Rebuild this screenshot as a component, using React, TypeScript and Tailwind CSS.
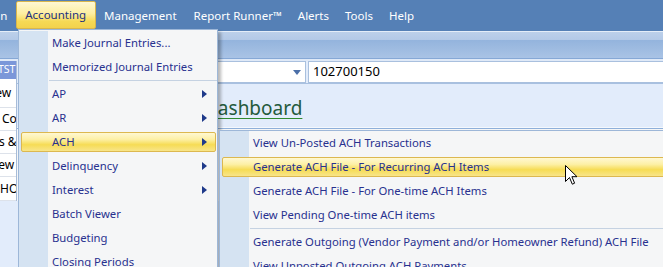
import React from "react";

const Arrow = () => (
  <svg width="5" height="8" viewBox="0 0 5 8" className="shrink-0">
    <path d="M0 0 L5 4 L0 8 Z" fill="#1e3a8a" />
  </svg>
);

type Item = { label: string; sub?: boolean; hi?: boolean } | "sep";

const mainItems: Item[] = [
  { label: "Make Journal Entries..." },
  { label: "Memorized Journal Entries" },
  "sep",
  { label: "AP", sub: true },
  { label: "AR", sub: true },
  { label: "ACH", sub: true, hi: true },
  { label: "Delinquency", sub: true },
  { label: "Interest", sub: true },
  { label: "Batch Viewer" },
  { label: "Budgeting" },
  { label: "Closing Periods" },
];

const subItems: Item[] = [
  { label: "View Un-Posted ACH Transactions" },
  { label: "Generate ACH File - For Recurring ACH Items", hi: true },
  { label: "Generate ACH File - For One-time ACH Items" },
  { label: "View Pending One-time ACH items" },
  "sep",
  { label: "Generate Outgoing (Vendor Payment and/or Homeowner Refund) ACH File" },
  { label: "View Unposted Outgoing ACH Payments" },
];

function MenuList({ items, arrowPad }: { items: Item[]; arrowPad: boolean }) {
  return (
    <div className="flex flex-col">
      {items.map((it, i) =>
        it === "sep" ? (
          <div key={i} className="h-[3px] flex">
            <div className="w-[29px] shrink-0 bg-[#d5e3f2]" />
            <div className="flex-1 flex flex-col justify-start pl-[1px]">
              <div className="h-px mt-[1px] bg-[#c5d2e2]" />
            </div>
          </div>
        ) : (
          <div key={i} className="relative h-[24px] flex items-center">
            <div className="absolute left-0 top-0 bottom-0 w-[29px] bg-[#d5e3f2]" />
            {it.hi && (
              <div className="absolute left-[2px] right-[1px] top-[2px] bottom-[2px] rounded-[2px] border border-[#dcb850] bg-[linear-gradient(to_bottom,#fff8d2_0%,#fdf0a6_35%,#f6dc55_65%,#f8e58a_100%)]" />
            )}
            <span className="relative pl-[33px] text-[#28318f] text-[11.3px] whitespace-nowrap">{it.label}</span>
            {it.sub && arrowPad && (
              <span className="relative ml-auto mr-[10px] flex items-center">
                <Arrow />
              </span>
            )}
          </div>
        )
      )}
    </div>
  );
}

export default function App() {
  const rows: { t: string; m: string; h: string }[] = [
    { t: "View", m: "ml-[-15px]", h: "h-[29px]" },
    { t: "Correspondence", m: "ml-[2px]", h: "h-[23px]" },
    { t: "Dues & Fees", m: "ml-[-24px]", h: "h-[23px]" },
    { t: "View All", m: "ml-[-12px]", h: "h-[23px]" },
    { t: "HOA", m: "ml-0", h: "h-[24px]" },
  ];
  return (
    <div className="relative w-[663px] h-[267px] overflow-hidden bg-[#e2ecfb] font-['Noto_Sans',sans-serif] text-[12px]">
      {/* menu bar */}
      <div className="h-[31px] bg-[#5580b6] flex items-center text-white text-[11.5px] overflow-hidden whitespace-nowrap">
        <div className="ml-[-36px] pl-[8px] pr-[9px]">Admin</div>
        <div className="h-[28px] mt-[-2px] pl-[8px] pr-[9px] flex items-center rounded-[2px] border border-[#d9b64c] text-[#22307f] bg-[linear-gradient(to_bottom,#fff8d4_0%,#fdeea0_45%,#f6d955_75%,#f3d24c_100%)]">
          Accounting
        </div>
        <div className="pl-[8px] pr-[9px]">Management</div>
        <div className="pl-[8px] pr-[8px]">Report Runner™</div>
        <div className="pl-[8px] pr-[8px]">Alerts</div>
        <div className="pl-[8px] pr-[8px]">Tools</div>
        <div className="pl-[8px] pr-[8px]">Help</div>
      </div>
      <div className="h-px bg-[#e4edf8]" />
      {/* toolbar strip */}
      <div className="h-[26px] bg-[linear-gradient(to_bottom,#bcd0ea_0%,#b3c9e7_30%,#94b4dd_32%,#a9c3e5_100%)]" />
      <div className="h-px bg-[#86a8d6]" />
      <div className="h-[2px] bg-[#dfe9f7]" />

      <div className="flex">
        {/* left grid */}
        <div className="w-[17px] shrink-0 bg-white border-r border-[#a7bcd8] overflow-hidden text-black">
          <div className="h-[18px] bg-[#7b97d9] text-white flex items-center whitespace-nowrap text-[10.5px]">
            <span className="ml-[-2px]">TSTE</span>
          </div>
          {rows.map((r, i) => (
            <div key={i} className={`${r.h} border-b border-[#dde2ea] flex items-center whitespace-nowrap`}>
              <span className={r.m}>{r.t}</span>
            </div>
          ))}
        </div>

        {/* right content */}
        <div className="flex-1 flex flex-col">
          <div className="h-[22px] flex items-stretch gap-[2px] pl-[80px]">
            <div className="w-[209px] bg-white border border-[#a9c0de] flex items-center justify-between px-[3px]">
              <span className="text-black text-[13px]">Account Number</span>
              <svg width="8" height="5" viewBox="0 0 8 5" className="mr-[1px]">
                <path d="M0 0 L8 0 L4 5 Z" fill="#4b6fa8" />
              </svg>
            </div>
            <div className="flex-1 bg-white border-y border-l border-[#a9c0de] flex items-center pl-[4px] text-black text-[13px]">
              102700150
            </div>
          </div>
          <div className="h-[44px] border-t border-[#a8c0e0] flex items-center pl-[187px]">
            <span className="text-[19px] leading-none text-[#245a3c] underline decoration-[#2f8a2f] underline-offset-[3px] mt-[6px]">
              Dashboard
            </span>
          </div>
          <div className="h-px bg-[#f4f8fd]" />
          <div className="flex-1 border-t border-[#8fb0da] bg-[#f5f6f7]" />
        </div>
      </div>

      {/* main dropdown */}
      <div className="absolute left-[18px] top-[29px] w-[200px] h-[260px] bg-[#f5f6f7] border border-[#9db7d8] pt-[1px] shadow-[3px_3px_3px_rgba(0,0,0,0.28)]">
        <MenuList items={mainItems} arrowPad />
      </div>

      {/* submenu */}
      <div className="absolute left-[219px] top-[130px] w-[460px] h-[160px] bg-[#f5f6f7] border border-[#9db7d8]">
        <MenuList items={subItems} arrowPad={false} />
      </div>

      {/* cursor */}
      <svg className="absolute left-[565px] top-[165px]" width="13" height="21" viewBox="0 0 13 21">
        <path
          d="M0.5 0.5 L0.5 16.5 L4.5 12.5 L7.3 19.2 L9.6 18.2 L6.9 11.7 L12 11.7 Z"
          fill="white"
          stroke="black"
          strokeWidth="1"
          strokeLinejoin="miter"
        />
      </svg>
    </div>
  );
}
